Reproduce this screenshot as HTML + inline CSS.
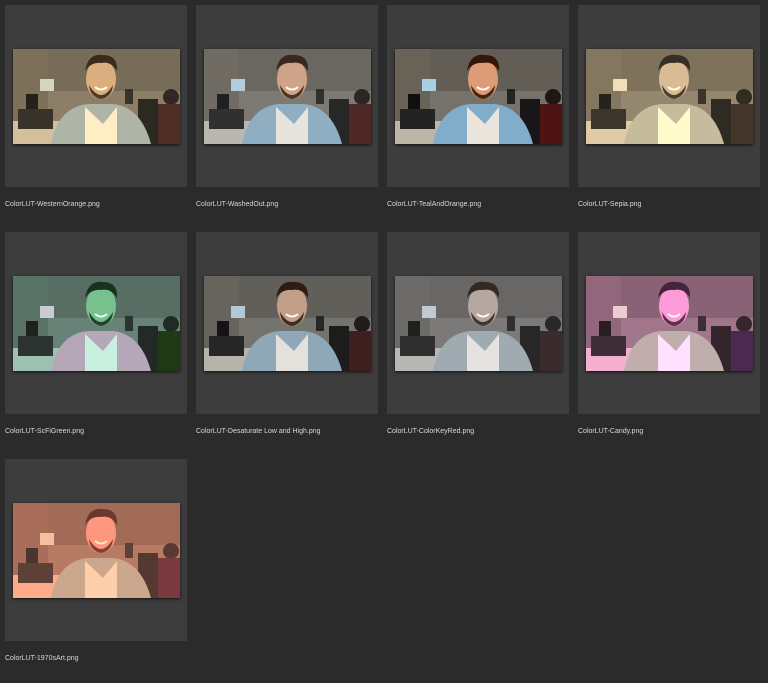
<!DOCTYPE html>
<html><head><style>
body{margin:0;background:#2b2b2b;width:768px;height:683px;overflow:hidden;font-family:"Liberation Sans",sans-serif;position:relative}
.t{position:absolute;width:182px;height:182px;background:#3d3d3d}
.im{position:absolute;left:8px;top:44px;width:167px;height:95px;overflow:hidden;box-shadow:0 1px 3px #111}
.im svg{display:block}
.l{position:absolute;font-size:7px;color:#d8d8d8;white-space:nowrap}
</style></head><body>
<svg width="0" height="0" style="position:absolute"><defs>
<g id="sc">
<rect width="167" height="95" fill="#77746d"/>
<rect y="0" width="167" height="42" fill="#65625c"/>
<rect x="0" y="0" width="35" height="95" fill="#6b665d"/>
<rect y="72" width="167" height="23" fill="#b3aea5"/>
<rect x="27" y="30" width="14" height="12" fill="#a8c4d4"/>
<rect x="13" y="45" width="12" height="20" fill="#1e1e1e"/>
<rect x="5" y="60" width="35" height="20" fill="#2e2e2e"/>
<circle cx="158" cy="48" r="8" fill="#2a2522"/>
<rect x="140" y="55" width="27" height="40" fill="#4e2424"/>
<rect x="125" y="50" width="20" height="45" fill="#252525"/>
<rect x="112" y="40" width="8" height="15" fill="#2e2e2e"/>
<path d="M38 95 Q45 58 75 55 L100 55 Q128 58 138 95Z" fill="#86a6bb"/>
<path d="M72 58 L90 75 L104 58 L104 95 L72 95Z" fill="#dcd8d2"/>
<ellipse cx="88" cy="30" rx="15" ry="20" fill="#c99a7e"/>
<path d="M72 22 Q75 4 90 6 Q105 6 104 22 Q98 12 88 14 Q78 13 72 22Z" fill="#3a2518"/>
<path d="M76 36 Q88 56 100 36 Q99 48 88 50 Q77 48 76 36Z" fill="#4a3222"/>
<path d="M82 38 Q88 43 94 38" stroke="#eee" stroke-width="2" fill="none"/>
</g></defs></svg>

<div class="t" style="left:5px;top:5px"><div class="im"><svg width="167" height="95" style="filter:sepia(.5) saturate(1.3)"><use href="#sc"/></svg></div></div>
<div class="t" style="left:196px;top:5px"><div class="im"><svg width="167" height="95" style="filter:brightness(1.05) saturate(.9)"><use href="#sc"/></svg></div></div>
<div class="t" style="left:387px;top:5px"><div class="im"><svg width="167" height="95" style="filter:contrast(1.15) saturate(1.2)"><use href="#sc"/></svg></div></div>
<div class="t" style="left:578px;top:5px"><div class="im"><svg width="167" height="95" style="filter:sepia(.8)"><use href="#sc"/></svg></div></div>

<div class="t" style="left:5px;top:232px"><div class="im"><svg width="167" height="95" style="filter:sepia(.3) hue-rotate(100deg) saturate(1.2)"><use href="#sc"/></svg></div></div>
<div class="t" style="left:196px;top:232px"><div class="im"><svg width="167" height="95" style="filter:saturate(.7) contrast(1.1)"><use href="#sc"/></svg></div></div>
<div class="t" style="left:387px;top:232px"><div class="im"><svg width="167" height="95" style="filter:grayscale(.7) brightness(1.05)"><use href="#sc"/></svg></div></div>
<div class="t" style="left:578px;top:232px"><div class="im"><svg width="167" height="95" style="filter:sepia(.5) hue-rotate(280deg) saturate(1.6)"><use href="#sc"/></svg></div></div>

<div class="t" style="left:5px;top:459px"><div class="im"><svg width="167" height="95" style="filter:invert(.1) sepia(.6) hue-rotate(-30deg) saturate(2.5)"><use href="#sc"/></svg></div></div>

<div class="l" style="left:5px;top:201px">ColorLUT-WesternOrange.png</div>
<div class="l" style="left:196px;top:201px">ColorLUT-WashedOut.png</div>
<div class="l" style="left:387px;top:201px">ColorLUT-TealAndOrange.png</div>
<div class="l" style="left:578px;top:201px">ColorLUT-Sepia.png</div>
<div class="l" style="left:5px;top:428px">ColorLUT-ScFiGreen.png</div>
<div class="l" style="left:196px;top:428px">ColorLUT-Desaturate Low and High.png</div>
<div class="l" style="left:387px;top:428px">ColorLUT-ColorKeyRed.png</div>
<div class="l" style="left:578px;top:428px">ColorLUT-Candy.png</div>
<div class="l" style="left:5px;top:655px">ColorLUT-1970sArt.png</div>
</body></html>
